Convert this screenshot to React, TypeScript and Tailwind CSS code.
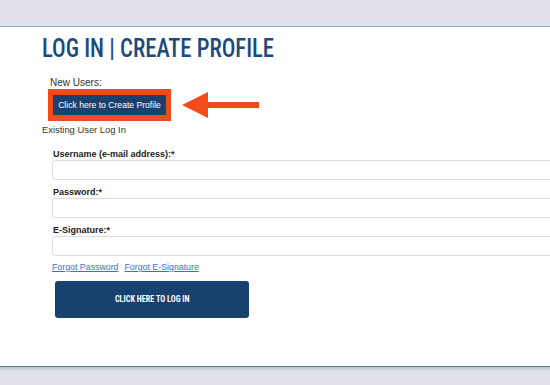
import React from "react";

export default function App() {
  const sans = { fontFamily: '"Liberation Sans", Arial, sans-serif' };
  const cond = { fontFamily: '"Roboto Condensed", Roboto, sans-serif' };
  return (
    <div className="w-[550px] h-[385px] overflow-hidden bg-[#e0e1ea] flex flex-col" style={sans}>
      <div className="h-[27px] shrink-0 border-b border-[#91a7c1]" />
      <div className="flex-1 bg-white flex flex-col">
        <h1
          className="ml-[42px] mt-[8px] text-[26px] leading-[26px] font-medium text-[#1d4a7d] origin-left scale-x-[0.87] whitespace-nowrap"
          style={cond}
        >
          LOG IN | CREATE PROFILE
        </h1>
        <p className="ml-[50px] mt-[16px] text-[10px] leading-[12px] text-[#333]">New Users:</p>
        <div className="ml-[48px] mt-0 flex items-center">
          <div className="bg-[#f04b18] px-[5px] py-[6px]">
            <div className="w-[113px] h-[20px] bg-[#1a406e] flex items-center justify-center text-white text-[8.6px] leading-none">
              Click here to Create Profile
            </div>
          </div>
          <svg width="80" height="30" viewBox="0 0 80 30" className="ml-[11px]">
            <polygon points="0,15 26,2 26,28" fill="#f04b18" />
            <rect x="25" y="12" width="52" height="6" fill="#f04b18" />
          </svg>
        </div>
        <p className="ml-[42px] mt-[3px] text-[9.4px] leading-[12px] text-[#333]">Existing User Log In</p>
        <div className="ml-[52px] flex flex-col mt-[6px]">
          {["Username (e-mail address):*", "Password:*", "E-Signature:*"].map((l) => (
            <div key={l} className="flex flex-col mt-[7px]">
              <label className="ml-[1px] text-[9px] leading-[10px] font-bold text-[#222]">{l}</label>
              <div className="mt-[1px] w-[520px] h-[20px] border border-[#dcdcdc] rounded-[3px] bg-white" />
            </div>
          ))}
          <div className="mt-[6px] flex gap-[6px] text-[8.8px] leading-[11px] text-[#3a6fd8]">
            <a className="underline">Forgot Password</a>
            <a className="underline">Forgot E-Signature</a>
          </div>
          <button
            className="ml-[3px] mt-[8px] w-[194px] h-[37px] rounded-[3px] bg-[#17416f] text-white text-[8.6px] font-bold flex items-center justify-center"
            style={cond}
          >
            <span className="scale-x-[0.95] whitespace-nowrap">CLICK HERE TO LOG IN</span>
          </button>
        </div>
      </div>
      <div className="shrink-0 h-[19px] border-t border-[#5f7790] bg-[linear-gradient(#b9bdc8,#e0e1ea_4px)]" />
    </div>
  );
}
